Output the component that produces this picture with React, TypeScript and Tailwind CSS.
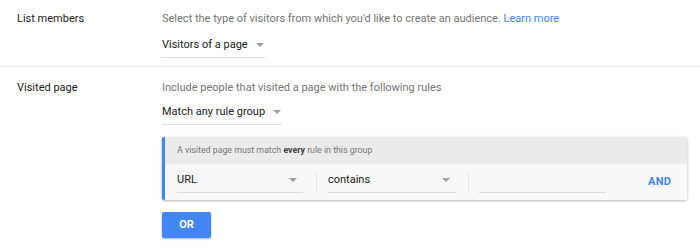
import { ReactNode } from "react";

function Arrow() {
  return <span className="inline-block w-0 h-0 border-l-[4px] border-r-[4px] border-t-[4px] border-l-transparent border-r-transparent border-t-[#9e9e9e]" />;
}

function Dropdown({ label, width }: { label: string; width: string }) {
  return (
    <div className={`flex items-center gap-[8px] h-[20px] box-content pb-[2px] border-b border-[#e0e0e0] whitespace-nowrap ${width}`}>
      <span className="text-[11px] text-[#212121]">{label}</span>
      <Arrow />
    </div>
  );
}

function Row({ label, children }: { label: string; children: ReactNode }) {
  return (
    <div className="flex">
      <div className="w-[162px] shrink-0 pl-[17px] h-[20px] leading-[20px] text-[11px] text-[#212121]">{label}</div>
      <div className="flex-1">{children}</div>
    </div>
  );
}

function Field({ label, width }: { label: string; width: string }) {
  return (
    <div className={`flex items-center justify-between h-[20px] box-content pb-[2px] border-b border-[#dcdcdc] ${width}`}>
      <span className="text-[11px] text-[#212121]">{label}</span>
      {label && <span className="mr-[6px] flex"><Arrow /></span>}
    </div>
  );
}

export default function App() {
  return (
    <div className="w-[700px] h-[249px] bg-white overflow-hidden" style={{ fontFamily: "Roboto, 'Liberation Sans', sans-serif" }}>
      {/* List members */}
      <div className="pt-[9px] pb-[8px] border-b border-[#eeeeee]">
        <Row label="List members">
          <p className="h-[20px] leading-[20px] text-[11px] text-[#757575] whitespace-nowrap">
            Select the type of visitors from which you'd like to create an audience. <span className="text-[#4285f4]">Learn more</span>
          </p>
          <div className="mt-[6px]">
            <Dropdown label="Visitors of a page" width="w-[103px]" />
          </div>
        </Row>
      </div>

      {/* Visited page */}
      <div className="pt-[11px]">
        <Row label="Visited page">
          <p className="h-[20px] leading-[20px] text-[11px] text-[#757575]">Include people that visited a page with the following rules</p>
          <div className="mt-[4px]">
            <Dropdown label="Match any rule group" width="w-[120px]" />
          </div>

          <div className="mt-[12px] mr-[13px] border-l-[3px] border-[#4285f4] rounded-[2px] shadow-[0_1px_3px_rgba(0,0,0,0.3)] overflow-hidden">
            <div className="h-[27px] bg-[#ebebeb] pl-[12px] flex items-center text-[8.8px] text-[#757575] whitespace-nowrap">
              A visited page must match&nbsp;<b className="font-bold text-[#424242]">every</b>&nbsp;rule in this group
            </div>
            <div className="h-[36px] bg-[#f8f8f8] pl-[12px] pr-[16px] pt-[6px] flex items-start">
              <Field label="URL" width="w-[126px]" />
              <div className="w-px h-[20px] bg-[#e6e6e6] mt-[3px] ml-[13px] mr-[11px]" />
              <Field label="contains" width="w-[128px]" />
              <div className="w-px h-[20px] bg-[#e6e6e6] mt-[3px] ml-[12px] mr-[10px]" />
              <Field label="" width="w-[127px]" />
              <div className="flex-1 flex justify-end h-[24px] items-center">
                <span className="text-[11px] font-bold text-[#4285f4] tracking-[0.2px]">AND</span>
              </div>
            </div>
          </div>

          <button className="mt-[12px] w-[49px] h-[26px] rounded-[2px] bg-[#4285f4] text-white text-[11px] font-bold shadow-[0_1px_2px_rgba(0,0,0,0.3)]">OR</button>
        </Row>
      </div>
    </div>
  );
}
